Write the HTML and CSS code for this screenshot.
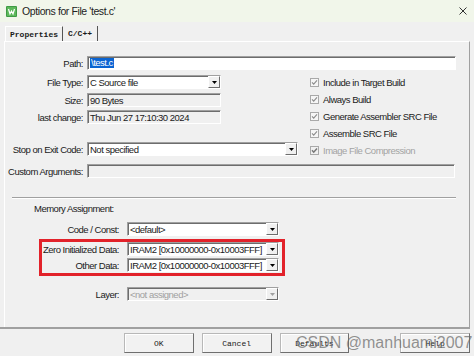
FILE: index.html
```html
<!DOCTYPE html>
<html lang="en">
<head>
  <meta charset="UTF-8" />
  <title>Options for File 'test.c'</title>
  <link rel="stylesheet" href="styles.css">
</head>
<body>
<div class="window">

  <!-- title bar -->
  <div class="titlebar">
    <svg class="app-icon" width="11" height="11" viewBox="0 0 11 11">
      <rect x="0" y="0" width="11" height="11" rx="1" fill="#3f9a45"/>
      <rect x="1" y="1" width="9" height="9" fill="#5cb85a"/>
      <path d="M2.5 3 L4 8 L5.5 5 L7 8 L8.5 3" fill="none" stroke="#fff" stroke-width="1.2"/>
    </svg>
    <span class="title">Options for File 'test.c'</span>
    <svg class="close" width="8" height="8" viewBox="0 0 8 8">
      <path d="M0.5 0.5 L7.5 7.5 M7.5 0.5 L0.5 7.5" stroke="#333" stroke-width="1"/>
    </svg>
  </div>

  <div class="dialog">
    <div class="tabs">
      <div class="tab active">Properties</div>
      <div class="tab">C/C++</div>
    </div>

    <div class="panel">
      <div class="row path-row">
        <span class="lbl">Path:</span>
        <div class="field w-path"><span class="sel">\test.c</span></div>
      </div>

      <div class="middle">
        <div class="left">
          <div class="row r-type">
            <span class="lbl">File Type:</span>
            <div class="field w-short">
              <span>C Source file</span>
              <span class="drop"><svg width="5" height="3" viewBox="0 0 5 3"><path d="M0 0 H5 L2.5 3 Z" fill="#000"/></svg></span>
            </div>
          </div>
          <div class="row r-size">
            <span class="lbl">Size:</span>
            <div class="field off w-short"><span>90 Bytes</span></div>
          </div>
          <div class="row r-date">
            <span class="lbl">last change:</span>
            <div class="field off w-short"><span>Thu Jun 27 17:10:30 2024</span></div>
          </div>
          <div class="row r-stop">
            <span class="lbl">Stop on Exit Code:</span>
            <div class="field w-stop">
              <span>Not specified</span>
              <span class="drop"><svg width="5" height="3" viewBox="0 0 5 3"><path d="M0 0 H5 L2.5 3 Z" fill="#000"/></svg></span>
            </div>
          </div>
        </div>

        <ul class="checks">
          <li><svg width="9" height="9" viewBox="0 0 9 9"><rect x="0.5" y="0.5" width="8" height="8" fill="#f6f6f6" stroke="#a9a9a9"/><path d="M2 4.3 L3.7 6.2 L7 2.4" fill="none" stroke="#8c8c8c" stroke-width="1.1"/></svg>Include in Target Build</li>
          <li><svg width="9" height="9" viewBox="0 0 9 9"><rect x="0.5" y="0.5" width="8" height="8" fill="#f6f6f6" stroke="#a9a9a9"/><path d="M2 4.3 L3.7 6.2 L7 2.4" fill="none" stroke="#8c8c8c" stroke-width="1.1"/></svg>Always Build</li>
          <li><svg width="9" height="9" viewBox="0 0 9 9"><rect x="0.5" y="0.5" width="8" height="8" fill="#f6f6f6" stroke="#a9a9a9"/><path d="M2 4.3 L3.7 6.2 L7 2.4" fill="none" stroke="#8c8c8c" stroke-width="1.1"/></svg>Generate Assembler SRC File</li>
          <li><svg width="9" height="9" viewBox="0 0 9 9"><rect x="0.5" y="0.5" width="8" height="8" fill="#f6f6f6" stroke="#a9a9a9"/><path d="M2 4.3 L3.7 6.2 L7 2.4" fill="none" stroke="#8c8c8c" stroke-width="1.1"/></svg>Assemble SRC File</li>
          <li class="dim"><svg width="9" height="9" viewBox="0 0 9 9"><rect x="0.5" y="0.5" width="8" height="8" fill="#f0f0f0" stroke="#a9a9a9"/><path d="M2 4.3 L3.7 6.2 L7 2.4" fill="none" stroke="#777" stroke-width="1.5"/></svg>Image File Compression</li>
        </ul>
      </div>

      <div class="row r-args">
        <span class="lbl">Custom Arguments:</span>
        <div class="field off w-args"></div>
      </div>

      <div class="separator"></div>

      <div class="mem-title">Memory Assignment:</div>

      <div class="row r-code">
        <span class="lbl mlbl">Code / Const:</span>
        <div class="field w-mem">
          <span>&lt;default&gt;</span>
          <span class="drop"><svg width="5" height="3" viewBox="0 0 5 3"><path d="M0 0 H5 L2.5 3 Z" fill="#000"/></svg></span>
        </div>
      </div>

      <!-- highlighted rows -->
      <div class="marked">
        <div class="row">
          <span class="lbl ilbl">Zero Initialized Data:</span>
          <div class="field w-mem">
            <span>IRAM2 [0x10000000-0x10003FFF]</span>
            <span class="drop"><svg width="5" height="3" viewBox="0 0 5 3"><path d="M0 0 H5 L2.5 3 Z" fill="#000"/></svg></span>
          </div>
        </div>
        <div class="row r-other">
          <span class="lbl ilbl">Other Data:</span>
          <div class="field w-mem">
            <span>IRAM2 [0x10000000-0x10003FFF]</span>
            <span class="drop"><svg width="5" height="3" viewBox="0 0 5 3"><path d="M0 0 H5 L2.5 3 Z" fill="#000"/></svg></span>
          </div>
        </div>
      </div>

      <div class="row r-layer">
        <span class="lbl mlbl">Layer:</span>
        <div class="field off w-mem">
          <span class="grey">&lt;not assigned&gt;</span>
          <span class="drop"><svg width="5" height="3" viewBox="0 0 5 3"><path d="M0 0 H5 L2.5 3 Z" fill="#a0a0a0"/></svg></span>
        </div>
      </div>
    </div>

    <div class="footer">
      <div class="btn">OK</div>
      <div class="btn">Cancel</div>
      <div class="btn">Defaults</div>
      <div class="btn help">Help</div>
    </div>
  </div>

  <div class="watermark">CSDN @manhuami2007</div>
</div>
</body>
</html>
```

FILE: styles.css
```css
body {
  margin: 0;
  font-family: "Liberation Sans", Arial, sans-serif;
  font-size: 9.5px;
  letter-spacing: -0.5px;
  color: #1a1a1a;
  background: #f0f0f0;
}
.window {
  width: 474px;
  height: 356px;
  position: relative;
  overflow: hidden;
}
.titlebar {
  height: 22px;
  background: #f1f6ea;
  display: flex;
  align-items: center;
  padding-left: 6px;
}
.title {
  font-size: 10.5px;
  letter-spacing: -0.4px;
  margin-left: 5px;
  color: #222;
}
.close {
  margin-left: auto;
  margin-right: 7px;
}
.dialog {
  background: #f0f0f0;
}
.tabs {
  display: flex;
  padding: 4px 0 0 5px;
  height: 15px;
}
.tab {
  font-family: "Liberation Mono", monospace;
  font-weight: bold;
  font-size: 8px;
  letter-spacing: 0;
  display: flex;
  align-items: center;
  padding: 0 5px;
  border-right: 1px solid #555;
}
.tab.active {
  padding: 0 4px;
  border-left: 1px solid #fff;
  border-top: 1px solid #fff;
}
.panel {
  margin-left: 4px;
  width: 466px;
  height: 286px;
  box-sizing: border-box;
  border-left: 1px solid #fff;
  border-top: 1px solid #fff;
  border-right: 1px solid #a0a0a0;
}
.row {
  display: flex;
  align-items: center;
  height: 14px;
}
.lbl {
  width: 82px;
  padding-right: 4px;
  box-sizing: border-box;
  text-align: right;
  white-space: nowrap;
}
.mlbl {
  width: 122px;
  padding-right: 8px;
}
.ilbl {
  width: 85px;
  padding-right: 8px;
}
.field {
  height: 14px;
  box-sizing: border-box;
  border: 1px solid;
  border-color: #a0a0a0 #fff #fff #a0a0a0;
  box-shadow: inset 1px 1px #6d6d6d;
  background: #fff;
  display: flex;
  align-items: center;
  padding-left: 2px;
  white-space: nowrap;
  overflow: hidden;
}
.field.off {
  background: #f0f0f0;
}
.sel {
  background: #0a64d2;
  color: #fff;
  padding: 0 1px;
  line-height: 10px;
}
.grey {
  color: #a0a0a0;
}
.drop {
  margin-left: auto;
  width: 12px;
  height: 12px;
  flex: none;
  box-sizing: border-box;
  background: #f0f0f0;
  border: 1px solid;
  border-color: #fff #6d6d6d #6d6d6d #fff;
  display: flex;
  align-items: center;
  justify-content: center;
}
.w-path { width: 369px; }
.w-short { width: 134px; }
.w-stop { width: 211px; }
.w-args { width: 368px; }
.w-mem { width: 152px; }

.path-row { margin-top: 14px; }
.middle {
  display: flex;
}
.left {
  width: 293px;
}
.r-type { margin-top: 5px; }
.r-size { margin-top: 4px; }
.r-date { margin-top: 3px; }
.r-stop { margin-top: 18px; }
.checks {
  list-style: none;
  margin: 4px 0 0 12px;
  padding: 0;
}
.checks li {
  height: 17px;
  display: flex;
  align-items: center;
}
.checks svg {
  margin-right: 4px;
}
.checks .dim {
  color: #a3a3a3;
}
.r-args { margin-top: 5px; }
.separator {
  margin: 19px 0 0 7px;
  width: 444px;
  border-top: 1px solid #a0a0a0;
  border-bottom: 1px solid #fff;
}
.mem-title {
  margin-top: 4px;
  height: 12px;
  line-height: 12px;
  padding-left: 29px;
}
.r-code { margin-top: 7px; }
.marked {
  margin: 3px 0 0 34px;
  width: 246px;
  box-sizing: border-box;
  border: 3px solid #e2222a;
  padding-bottom: 1px;
}
.r-other { margin-top: 2px; }
.r-layer { margin-top: 11px; }

.footer {
  width: 470px;
  border-top: 2px solid #a0a0a0;
  display: flex;
  padding: 4px 0 0 124px;
  box-sizing: border-box;
  gap: 8px;
}
.btn {
  width: 70px;
  height: 20px;
  box-sizing: border-box;
  border: 1px solid;
  border-color: #b8b8b8 #6f6f6f #6f6f6f #b8b8b8;
  box-shadow: inset 1px 1px #fff;
  background: #f2f2f2;
  font-family: "Liberation Mono", monospace;
  font-size: 8px;
  letter-spacing: 0;
  display: flex;
  align-items: center;
  justify-content: center;
}
.btn.help {
  margin-left: 43px;
}
.watermark {
  position: absolute;
  left: 296px;
  top: 334px;
  font-size: 16px;
  letter-spacing: 0;
  color: rgba(105, 105, 105, 0.72);
  white-space: nowrap;
}
```
